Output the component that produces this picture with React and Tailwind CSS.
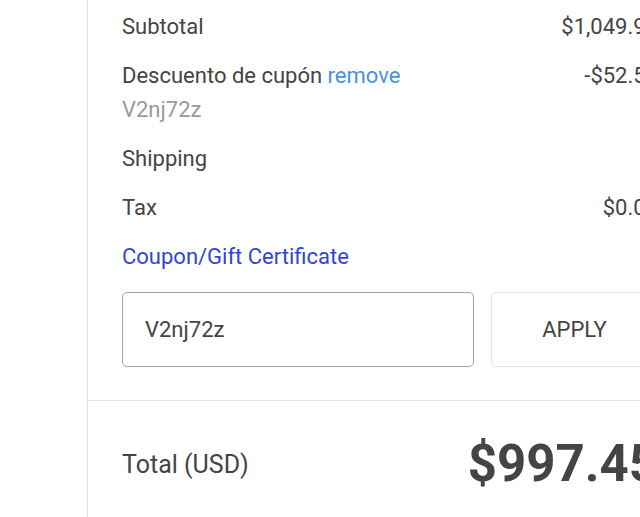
export default function App() {
  const rows = [
    { label: "Subtotal", value: "$1,049.99" },
  ];

  return (
    <div
      className="w-[640px] h-[517px] overflow-hidden bg-white text-[#444444]"
      style={{ fontFamily: "Roboto, 'Liberation Sans', sans-serif" }}
    >
      <div className="ml-[87px] w-[604px] h-full border-l border-[#e3e3e3]">
        <div className="pl-[34px] pr-[33px] pt-[10px] pb-[33px] text-[22px] leading-[34px]">
          {rows.map((row) => (
            <div key={row.label} className="flex justify-between">
              <span>{row.label}</span>
              <span>{row.value}</span>
            </div>
          ))}

          <div className="mt-[15px] flex justify-between">
            <div>
              <div>
                Descuento de cupón <span className="text-[#4a90e2]">remove</span>
              </div>
              <div className="text-[#9a9a9a]">V2nj72z</div>
            </div>
            <span>-$52.50</span>
          </div>

          <div className="mt-[15px] flex justify-between">
            <span>Shipping</span>
            <span></span>
          </div>

          <div className="mt-[15px] flex justify-between">
            <span>Tax</span>
            <span>$0.00</span>
          </div>

          <div className="mt-[15px] text-[#2f45d6]">Coupon/Gift Certificate</div>

          <div className="mt-[18px] flex gap-[17px]">
            <div className="w-[352px] h-[75px] border border-[#a3a3a3] rounded-[5px] flex items-center px-[22px]">
              V2nj72z
            </div>
            <button className="flex-1 h-[75px] border border-[#e3e3e3] rounded-[5px] text-[#444444]">
              APPLY
            </button>
          </div>
        </div>

        <div className="border-t border-[#e3e3e3] pl-[34px] pr-[33px] h-[128px] flex items-center justify-between">
          <span className="text-[25px]">Total (USD)</span>
          <span className="text-[51px] font-bold text-[#444444]">$997.45</span>
        </div>
      </div>
    </div>
  );
}
